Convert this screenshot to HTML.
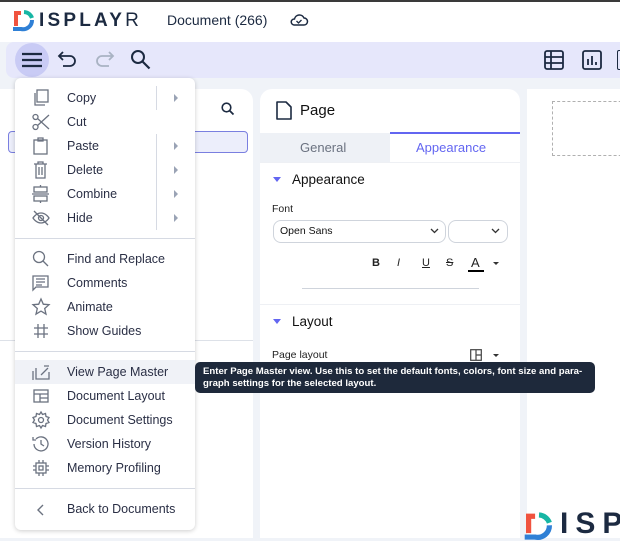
<!DOCTYPE html>
<html><head><meta charset="utf-8"><style>
*{box-sizing:border-box;margin:0;padding:0}
body{width:620px;height:538px;overflow:hidden;background:#f0f3f8;font-family:"Liberation Sans",sans-serif;color:#1f2937;position:relative}
.a{position:absolute}
.mi{position:absolute;left:67px;font-size:12.5px;color:#2a2f45}
.arr{position:absolute;left:174px;width:0;height:0;border-left:4px solid #9aa3b5;border-top:4px solid transparent;border-bottom:4px solid transparent}
.sep{position:absolute;left:15px;width:180px;height:1px;background:#d6dae3}
svg{overflow:visible}
</style></head><body>
<div class="a" style="left:0;top:0;width:620px;height:2px;background:#3a3a3a"></div>
<div class="a" style="left:0;top:2px;width:620px;height:40px;background:#fff"></div>
<!-- logo -->
<svg class="a" style="left:14px;top:11px" width="20" height="19" viewBox="0 0 20 19">
<path d="M0 0h7v4H4v11H0z" fill="#f0533f"/>
<path d="M10 1a9 9 0 0 1 8 6" stroke="#17b6a4" stroke-width="4" fill="none"/>
<path d="M18 9a9 9 0 0 1-11 9H1v-2" stroke="#2f80d6" stroke-width="4" fill="none"/>
</svg>
<div class="a" style="left:39px;top:10px;font-size:19px;font-weight:bold;color:#1c2a41;letter-spacing:3.2px">ISPLAY<span style="font-weight:normal">R</span></div>
<div class="a" style="left:167px;top:12px;font-size:14px;color:#1c2a41">Document (266)</div>
<svg class="a" style="left:290px;top:13px" width="18" height="14" viewBox="0 0 18 14"><path d="M4 12h10a3.5 3.5 0 0 0 0-7 5 5 0 0 0-9.5 1A3 3 0 0 0 4 12z" fill="none" stroke="#1c2a41" stroke-width="1.5"/><path d="M6.5 8l2 2 3-3" fill="none" stroke="#1c2a41" stroke-width="1.3"/></svg>
<!-- toolbar -->
<div class="a" style="left:6px;top:42px;width:620px;height:36px;background:#e6e7fb;border-radius:8px 0 0 8px"></div>
<div class="a" style="left:15px;top:43px;width:34px;height:34px;border-radius:50%;background:#c9cbf5"></div>
<svg class="a" style="left:21px;top:52px" width="22" height="16"><path d="M1 2h20M1 8h20M1 14h20" stroke="#1c2a41" stroke-width="2.2"/></svg>
<svg class="a" style="left:58px;top:50px" width="20" height="18"><path d="M5 2L1 6l4 4M1 6h11a5 5 0 0 1 0 10H5" fill="none" stroke="#1c2a41" stroke-width="1.8"/></svg>
<svg class="a" style="left:94px;top:50px" width="20" height="18"><path d="M15 2l4 4-4 4M19 6H8a5 5 0 0 0 0 10h7" fill="none" stroke="#a9b3c3" stroke-width="1.8"/></svg>
<svg class="a" style="left:130px;top:49px" width="22" height="22"><circle cx="8" cy="8" r="6" fill="none" stroke="#1c2a41" stroke-width="2"/><path d="M12.5 12.5l7 7" stroke="#1c2a41" stroke-width="2.2"/></svg>
<svg class="a" style="left:544px;top:50px" width="20" height="20"><rect x="1" y="1" width="18" height="18" rx="2" fill="none" stroke="#1c2a41" stroke-width="1.8"/><path d="M1 7h18M1 13h18M7 1v18" stroke="#1c2a41" stroke-width="1.8"/></svg>
<svg class="a" style="left:582px;top:50px" width="20" height="20"><rect x="1" y="1" width="18" height="18" rx="2" fill="none" stroke="#1c2a41" stroke-width="1.8"/><path d="M6 9v6M10 6v9M14 12v3" stroke="#1c2a41" stroke-width="1.8"/></svg>
<div class="a" style="left:617px;top:50px;width:6px;height:20px;border:1.8px solid #1c2a41;border-radius:2px"></div>
<!-- panels -->
<div class="a" style="left:0;top:89px;width:253px;height:449px;background:#fff;border-radius:0 12px 0 0"></div>
<div class="a" style="left:8px;top:131px;width:240px;height:22px;border:1px solid #7a7fe0;border-radius:4px;background:#eceefb"></div>
<svg class="a" style="left:221px;top:102px" width="14" height="14"><circle cx="5.5" cy="5.5" r="4.3" fill="none" stroke="#1c2a41" stroke-width="1.6"/><path d="M8.5 8.5l4 4" stroke="#1c2a41" stroke-width="1.8"/></svg>
<div class="a" style="left:0;top:340px;width:253px;height:1px;background:#dde1e8"></div>
<div class="a" style="left:260px;top:89px;width:260px;height:449px;background:#fff;border-radius:12px 12px 0 0"></div>
<div class="a" style="left:527px;top:89px;width:93px;height:449px;background:#fff"></div>
<div class="a" style="left:552px;top:101px;width:80px;height:55px;border:1px dashed #b0b0b0"></div>
<!-- page panel -->
<svg class="a" style="left:276px;top:101px" width="16" height="19"><path d="M1 1h9l5 5v12H1z" fill="none" stroke="#1c2a41" stroke-width="1.6" stroke-linejoin="round"/></svg>
<div class="a" style="left:300px;top:102px;font-size:15px;color:#111">Page</div>
<div class="a" style="left:260px;top:133px;width:130px;height:29px;background:#eef1f6"></div>
<div class="a" style="left:390px;top:132px;width:130px;height:2px;background:#6366f1"></div>
<div class="a" style="left:300px;top:140px;font-size:13px;color:#6b7280">General</div>
<div class="a" style="left:416px;top:140px;font-size:13px;color:#6366f1">Appearance</div>
<div class="a" style="left:260px;top:162px;width:260px;height:1px;background:#eef0f4"></div>
<div class="a" style="left:273px;top:177px;border-top:5px solid #6366f1;border-left:4px solid transparent;border-right:4px solid transparent"></div>
<div class="a" style="left:292px;top:172px;font-size:13.5px;color:#111">Appearance</div>
<div class="a" style="left:272px;top:203px;font-size:10.5px;color:#222">Font</div>
<div class="a" style="left:273px;top:220px;width:173px;height:23px;border:1px solid #cfd4dc;border-radius:8px;font-size:10.5px;padding:4px 6px;color:#111">Open Sans</div>
<div class="a" style="left:448px;top:220px;width:60px;height:23px;border:1px solid #cfd4dc;border-radius:8px"></div>
<svg class="a" style="left:430px;top:228px" width="9" height="6"><path d="M1 1l3.5 3.5L8 1" fill="none" stroke="#333" stroke-width="1.3"/></svg>
<svg class="a" style="left:491px;top:228px" width="9" height="6"><path d="M1 1l3.5 3.5L8 1" fill="none" stroke="#333" stroke-width="1.3"/></svg>
<div class="a" style="left:372px;top:257px;font-size:11px;font-weight:bold;color:#222">B</div>
<div class="a" style="left:397px;top:257px;font-size:11px;font-style:italic;color:#222">I</div>
<div class="a" style="left:422px;top:257px;font-size:11px;text-decoration:underline;color:#222">U</div>
<div class="a" style="left:446px;top:257px;font-size:11px;text-decoration:line-through;color:#222">S</div>
<div class="a" style="left:471px;top:255px;font-size:13px;color:#222">A</div>
<div class="a" style="left:468px;top:270px;width:16px;height:2px;background:#000"></div>
<div class="a" style="left:493px;top:262px;border-top:3px solid #333;border-left:3px solid transparent;border-right:3px solid transparent"></div>
<div class="a" style="left:302px;top:288px;width:177px;height:1px;background:#cfd4dc"></div>
<div class="a" style="left:260px;top:304px;width:260px;height:1px;background:#eef0f4"></div>
<div class="a" style="left:273px;top:319px;border-top:5px solid #6366f1;border-left:4px solid transparent;border-right:4px solid transparent"></div>
<div class="a" style="left:292px;top:314px;font-size:13.5px;color:#111">Layout</div>
<div class="a" style="left:272px;top:349px;font-size:10.5px;color:#222">Page layout</div>
<svg class="a" style="left:470px;top:349px" width="12" height="12"><rect x="0.7" y="0.7" width="10.6" height="10.6" fill="none" stroke="#444" stroke-width="1.2"/><path d="M6 1v10M6 6h5" stroke="#444" stroke-width="1.2"/></svg>
<div class="a" style="left:493px;top:354px;border-top:3px solid #333;border-left:3px solid transparent;border-right:3px solid transparent"></div>
<!-- bottom logo -->
<svg class="a" style="left:526px;top:511px" width="26" height="30" viewBox="0 0 20 19"><path d="M0 0h7v4H4v11H0z" fill="#f0533f"/><path d="M10 1a9 9 0 0 1 8 6" stroke="#17b6a4" stroke-width="4" fill="none"/><path d="M18 9a9 9 0 0 1-11 9H1v-2" stroke="#2f80d6" stroke-width="4" fill="none"/></svg>
<div class="a" style="left:560px;top:507px;width:60px;height:31px;overflow:hidden;font-size:30px;font-weight:bold;color:#1c2a41;letter-spacing:7px;white-space:nowrap">ISPL</div>
<!-- menu -->
<div class="a" style="left:15px;top:78px;width:180px;height:452px;background:#fff;border-radius:6px;box-shadow:0 1px 5px rgba(0,0,0,.2)"></div>
<div class="a" style="left:15px;top:360px;width:180px;height:24px;background:#f0f2f7"></div>
<div class="a" style="left:156px;top:86px;width:1px;height:24px;background:#d6dae3"></div>
<div class="a" style="left:156px;top:134px;width:1px;height:96px;background:#d6dae3"></div>
<div class="sep" style="top:238px"></div><div class="sep" style="top:351px"></div><div class="sep" style="top:488px"></div>
<div class="mi" style="top:91px">Copy</div><div class="arr" style="top:94px"></div>
<div class="mi" style="top:115px">Cut</div>
<div class="mi" style="top:139px">Paste</div><div class="arr" style="top:142px"></div>
<div class="mi" style="top:163px">Delete</div><div class="arr" style="top:166px"></div>
<div class="mi" style="top:187px">Combine</div><div class="arr" style="top:190px"></div>
<div class="mi" style="top:211px">Hide</div><div class="arr" style="top:214px"></div>
<div class="mi" style="top:252px">Find and Replace</div>
<div class="mi" style="top:276px">Comments</div>
<div class="mi" style="top:300px">Animate</div>
<div class="mi" style="top:324px">Show Guides</div>
<div class="mi" style="top:365px">View Page Master</div>
<div class="mi" style="top:389px">Document Layout</div>
<div class="mi" style="top:413px">Document Settings</div>
<div class="mi" style="top:437px">Version History</div>
<div class="mi" style="top:461px">Memory Profiling</div>
<div class="mi" style="top:502px">Back to Documents</div>
<!-- icons -->
<svg class="a" style="left:32px;top:89px" width="18" height="18" fill="none" stroke="#6b7280" stroke-width="1.3"><rect x="5" y="1" width="11" height="12"/><path d="M3 4v12h10"/></svg>
<svg class="a" style="left:32px;top:113px" width="18" height="18" fill="none" stroke="#6b7280" stroke-width="1.3"><circle cx="3.5" cy="4" r="2.5"/><circle cx="3.5" cy="14" r="2.5"/><path d="M5.5 5.5L17 16M5.5 12.5L17 2"/></svg>
<svg class="a" style="left:32px;top:137px" width="18" height="18" fill="none" stroke="#6b7280" stroke-width="1.3"><rect x="2" y="3" width="13" height="14"/><path d="M6 1h5v3H6z"/></svg>
<svg class="a" style="left:32px;top:161px" width="18" height="18" fill="none" stroke="#6b7280" stroke-width="1.3"><path d="M2 3h13M4 3v14h9V3M7 6v8M10 6v8M6 3V1h5v2"/></svg>
<svg class="a" style="left:32px;top:185px" width="18" height="18" fill="none" stroke="#6b7280" stroke-width="1.3"><rect x="2" y="2" width="13" height="5"/><rect x="2" y="11" width="13" height="5"/><path d="M0 9h17M8.5 0v2M8.5 16v2"/></svg>
<svg class="a" style="left:32px;top:209px" width="18" height="18" fill="none" stroke="#6b7280" stroke-width="1.3"><path d="M1 9s3-5 8-5 8 5 8 5-3 5-8 5-8-5-8-5z"/><circle cx="9" cy="9" r="2.5"/><path d="M2 2l14 14"/></svg>
<svg class="a" style="left:32px;top:250px" width="18" height="18" fill="none" stroke="#6b7280" stroke-width="1.3"><circle cx="7" cy="7" r="5.5"/><path d="M11 11l5 5"/></svg>
<svg class="a" style="left:32px;top:274px" width="18" height="18" fill="none" stroke="#6b7280" stroke-width="1.3"><path d="M1 2h15v11H4l-3 3z"/><path d="M4 5h9M4 8h9M4 11h6"/></svg>
<svg class="a" style="left:32px;top:298px" width="18" height="18" fill="none" stroke="#6b7280" stroke-width="1.3"><path d="M9 1l2.3 5.2 5.7.5-4.3 3.8 1.3 5.6L9 13.1 4 16.1l1.3-5.6L1 6.7l5.7-.5z"/></svg>
<svg class="a" style="left:32px;top:322px" width="18" height="18" fill="none" stroke="#6b7280" stroke-width="1.3"><path d="M6 2v14M12 2v14M2 6h14M2 12h14"/></svg>
<svg class="a" style="left:32px;top:363px" width="18" height="18" fill="none" stroke="#6b7280" stroke-width="1.3"><path d="M4 5v11h13V9"/><path d="M1 8v9"/><path d="M9 12l7-7M12 3h5"/></svg>
<svg class="a" style="left:32px;top:387px" width="18" height="18" fill="none" stroke="#6b7280" stroke-width="1.3"><rect x="2" y="3" width="14" height="12"/><path d="M2 7h14M8 7v8M8 11h8"/></svg>
<svg class="a" style="left:32px;top:411px" width="18" height="18" fill="none" stroke="#6b7280" stroke-width="1.3"><circle cx="9" cy="9" r="2.5"/><path d="M9 1l1.5 2.5 3-1 .5 3 3 1-1.5 2.5 1.5 2.5-3 1-.5 3-3-1L9 17l-1.5-2.5-3 1-.5-3-3-1L2.5 9 1 6.5l3-1 .5-3 3 1z"/></svg>
<svg class="a" style="left:32px;top:435px" width="18" height="18" fill="none" stroke="#6b7280" stroke-width="1.3"><path d="M2 9a7 7 0 1 0 2-5"/><path d="M1 2v3h3"/><path d="M9 5v4l3 2"/></svg>
<svg class="a" style="left:32px;top:459px" width="18" height="18" fill="none" stroke="#6b7280" stroke-width="1.3"><rect x="4" y="4" width="10" height="10"/><rect x="7" y="7" width="4" height="4"/><path d="M7 1v3M11 1v3M7 14v3M11 14v3M1 7h3M1 11h3M14 7h3M14 11h3"/></svg>
<svg class="a" style="left:36px;top:504px" width="10" height="12" fill="none" stroke="#6b7280" stroke-width="1.4"><path d="M7 1L2 6l5 5"/></svg>
<!-- tooltip -->
<div class="a" style="left:195px;top:362px;width:400px;height:31px;background:#1e293b;border-radius:5px;color:#fff;font-size:9.6px;font-weight:bold;line-height:12px;padding:4px 8px">Enter Page Master view. Use this to set the default fonts, colors, font size and para-<br>graph settings for the selected layout.</div>
</body></html>
